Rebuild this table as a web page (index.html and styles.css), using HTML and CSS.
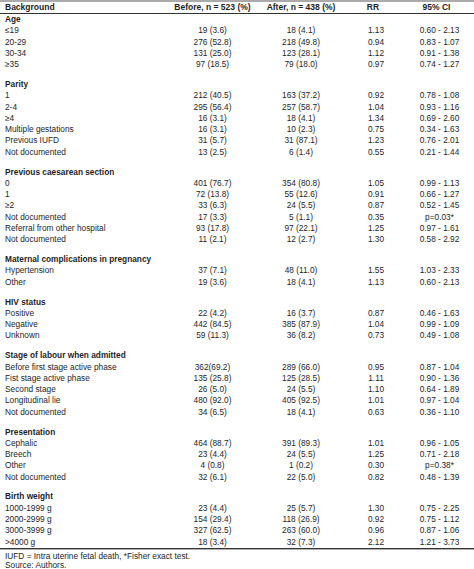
FILE: index.html
```html
<!DOCTYPE html>
<html>
<head>
<meta charset="utf-8">
<link rel="stylesheet" href="styles.css">
</head>
<body>
<table class="data">
<colgroup>
<col class="c-label"><col class="c-before"><col class="c-after"><col class="c-rr"><col class="c-ci">
</colgroup>
<thead>
<tr><th class="lbl">Background</th><th>Before, n = 523 (%)</th><th>After, n = 438 (%)</th><th>RR</th><th>95% CI</th></tr>
</thead>
<tbody>
<tr class="sec"><td colspan="5">Age</td></tr>
<tr><td>≤19</td><td>19 (3.6)</td><td>18 (4.1)</td><td>1.13</td><td>0.60 - 2.13</td></tr>
<tr><td>20-29</td><td>276 (52.8)</td><td>218 (49.8)</td><td>0.94</td><td>0.83 - 1.07</td></tr>
<tr><td>30-34</td><td>131 (25.0)</td><td>123 (28.1)</td><td>1.12</td><td>0.91 - 1.38</td></tr>
<tr><td>≥35</td><td>97 (18.5)</td><td>79 (18.0)</td><td>0.97</td><td>0.74 - 1.27</td></tr>
<tr class="gap"><td colspan="5"></td></tr>
<tr class="sec"><td colspan="5">Parity</td></tr>
<tr><td>1</td><td>212 (40.5)</td><td>163 (37.2)</td><td>0.92</td><td>0.78 - 1.08</td></tr>
<tr><td>2-4</td><td>295 (56.4)</td><td>257 (58.7)</td><td>1.04</td><td>0.93 - 1.16</td></tr>
<tr><td>≥4</td><td>16 (3.1)</td><td>18 (4.1)</td><td>1.34</td><td>0.69 - 2.60</td></tr>
<tr><td>Multiple gestations</td><td>16 (3.1)</td><td>10 (2.3)</td><td>0.75</td><td>0.34 - 1.63</td></tr>
<tr><td>Previous IUFD</td><td>31 (5.7)</td><td>31 (87.1)</td><td>1.23</td><td>0.76 - 2.01</td></tr>
<tr><td>Not documented</td><td>13 (2.5)</td><td>6 (1.4)</td><td>0.55</td><td>0.21 - 1.44</td></tr>
<tr class="gap"><td colspan="5"></td></tr>
<tr class="sec"><td colspan="5">Previous caesarean section</td></tr>
<tr><td>0</td><td>401 (76.7)</td><td>354 (80.8)</td><td>1.05</td><td>0.99 - 1.13</td></tr>
<tr><td>1</td><td>72 (13.8)</td><td>55 (12.6)</td><td>0.91</td><td>0.66 - 1.27</td></tr>
<tr><td>≥2</td><td>33 (6.3)</td><td>24 (5.5)</td><td>0.87</td><td>0.52 - 1.45</td></tr>
<tr><td>Not documented</td><td>17 (3.3)</td><td>5 (1.1)</td><td>0.35</td><td>p=0.03*</td></tr>
<tr><td>Referral from other hospital</td><td>93 (17.8)</td><td>97 (22.1)</td><td>1.25</td><td>0.97 - 1.61</td></tr>
<tr><td>Not documented</td><td>11 (2.1)</td><td>12 (2.7)</td><td>1.30</td><td>0.58 - 2.92</td></tr>
<tr class="gap"><td colspan="5"></td></tr>
<tr class="sec"><td colspan="5">Maternal complications in pregnancy</td></tr>
<tr><td>Hypertension</td><td>37 (7.1)</td><td>48 (11.0)</td><td>1.55</td><td>1.03 - 2.33</td></tr>
<tr><td>Other</td><td>19 (3.6)</td><td>18 (4.1)</td><td>1.13</td><td>0.60 - 2.13</td></tr>
<tr class="gap"><td colspan="5"></td></tr>
<tr class="sec"><td colspan="5">HIV status</td></tr>
<tr><td>Positive</td><td>22 (4.2)</td><td>16 (3.7)</td><td>0.87</td><td>0.46 - 1.63</td></tr>
<tr><td>Negative</td><td>442 (84.5)</td><td>385 (87.9)</td><td>1.04</td><td>0.99 - 1.09</td></tr>
<tr><td>Unknown</td><td>59 (11.3)</td><td>36 (8.2)</td><td>0.73</td><td>0.49 - 1.08</td></tr>
<tr class="gap"><td colspan="5"></td></tr>
<tr class="sec"><td colspan="5">Stage of labour when admitted</td></tr>
<tr><td>Before first stage active phase</td><td>362(69.2)</td><td>289 (66.0)</td><td>0.95</td><td>0.87 - 1.04</td></tr>
<tr><td>Fist stage active phase</td><td>135 (25.8)</td><td>125 (28.5)</td><td>1.11</td><td>0.90 - 1.36</td></tr>
<tr><td>Second stage</td><td>26 (5.0)</td><td>24 (5.5)</td><td>1.10</td><td>0.64 - 1.89</td></tr>
<tr><td>Longitudinal lie</td><td>480 (92.0)</td><td>405 (92.5)</td><td>1.01</td><td>0.97 - 1.04</td></tr>
<tr><td>Not documented</td><td>34 (6.5)</td><td>18 (4.1)</td><td>0.63</td><td>0.36 - 1.10</td></tr>
<tr class="gap"><td colspan="5"></td></tr>
<tr class="sec"><td colspan="5">Presentation</td></tr>
<tr><td>Cephalic</td><td>464 (88.7)</td><td>391 (89.3)</td><td>1.01</td><td>0.96 - 1.05</td></tr>
<tr><td>Breech</td><td>23 (4.4)</td><td>24 (5.5)</td><td>1.25</td><td>0.71 - 2.18</td></tr>
<tr><td>Other</td><td>4 (0.8)</td><td>1 (0.2)</td><td>0.30</td><td>p=0.38*</td></tr>
<tr><td>Not documented</td><td>32 (6.1)</td><td>22 (5.0)</td><td>0.82</td><td>0.48 - 1.39</td></tr>
<tr class="gap"><td colspan="5"></td></tr>
<tr class="sec"><td colspan="5">Birth weight</td></tr>
<tr><td>1000-1999 g</td><td>23 (4.4)</td><td>25 (5.7)</td><td>1.30</td><td>0.75 - 2.25</td></tr>
<tr><td>2000-2999 g</td><td>154 (29.4)</td><td>118 (26.9)</td><td>0.92</td><td>0.75 - 1.12</td></tr>
<tr><td>3000-3999 g</td><td>327 (62.5)</td><td>263 (60.0)</td><td>0.96</td><td>0.87 - 1.06</td></tr>
<tr class="last"><td>&gt;4000 g</td><td>18 (3.4)</td><td>32 (7.3)</td><td>2.12</td><td>1.21 - 3.73</td></tr>
</tbody>
</table>
<div class="notes">
<p>IUFD = Intra uterine fetal death, *Fisher exact test.</p>
<p>Source: Authors.</p>
</div>
</body>
</html>
```
FILE: styles.css
```css
html, body {
  margin: 0;
  padding: 0;
  background: #ffffff;
}
body {
  font-family: "Liberation Sans", Arial, sans-serif;
  font-size: 8.3px;
  color: #1e1e1e;
  width: 474px;
  overflow: hidden;
}
.data {
  width: 474px;
  border-collapse: collapse;
  table-layout: fixed;
}
.c-label { width: 170px; }
.c-before { width: 85px; }
.c-after { width: 92px; }
.c-rr { width: 52px; }
.c-ci { width: 75px; }
.data th {
  font-weight: bold;
  font-size: 8.5px;
  text-align: center;
  line-height: 11px;
  padding: 0;
  border-top: 2px solid #aaaaaa;
  border-bottom: 1px solid #333333;
  white-space: nowrap;
}
.data th.lbl {
  text-align: left;
  padding-left: 5px;
}
.data td {
  padding: 0;
  line-height: 11.3px;
  height: 11.3px;
  text-align: center;
  white-space: nowrap;
}
.data td:first-child {
  text-align: left;
  padding-left: 5px;
}
.data td:nth-child(4),
.data td:nth-child(5) {
  padding-left: 6px;
}
.data tr.sec td {
  font-weight: bold;
  padding-left: 5px;
}
.data tr.gap td {
  height: 8.5px;
  line-height: 0;
}
.data tr.last td {
  border-bottom: 1px solid #333333;
}
.notes {
  border-top: 1px solid #b0b0b0;
  padding: 2px 0 0 5px;
}
.notes p {
  margin: 0;
  line-height: 9px;
}
```
